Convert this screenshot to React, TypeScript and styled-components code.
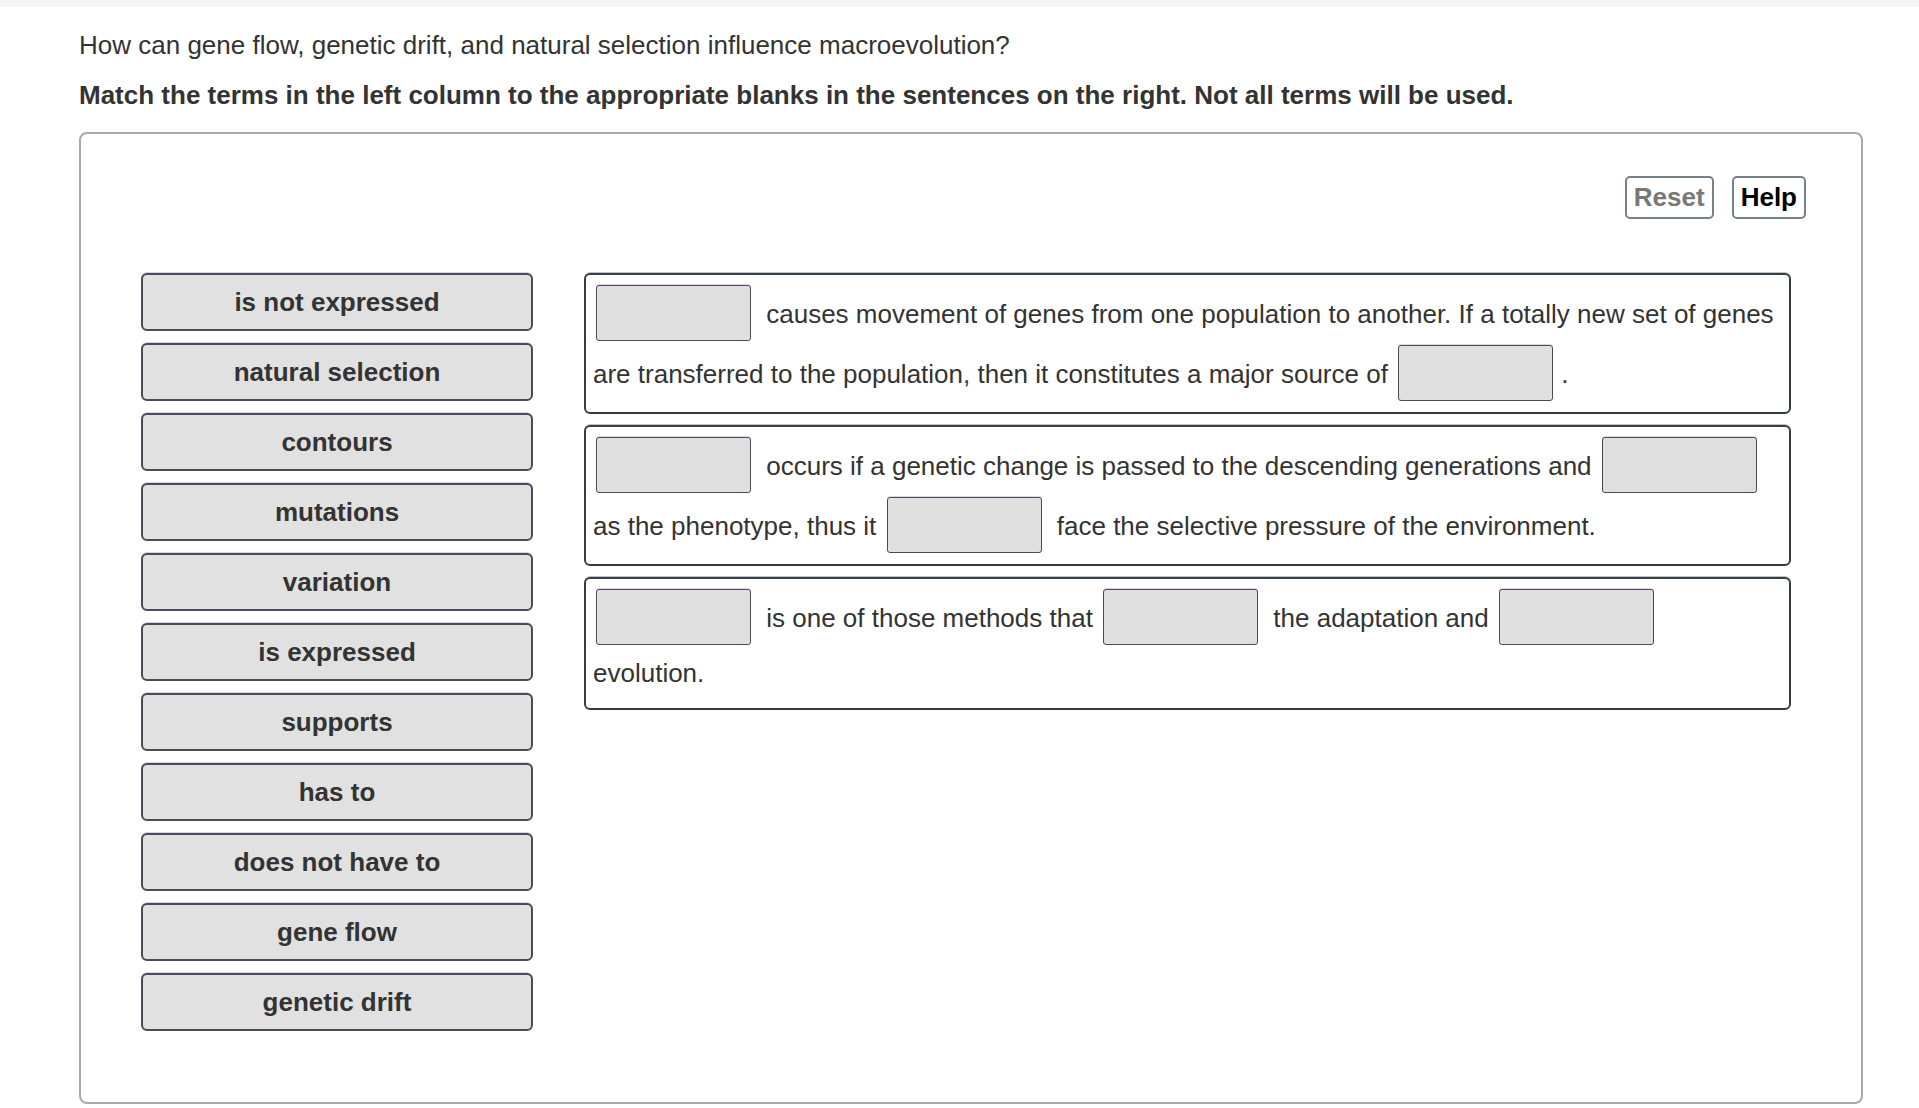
import React from 'react';
import styled, { createGlobalStyle } from 'styled-components';

const GlobalStyle = createGlobalStyle`
  html, body {
    margin: 0;
    padding: 0;
    background: #ffffff;
  }
  body {
    font-family: 'Liberation Sans', Arial, Helvetica, sans-serif;
    color: #333333;
  }
  * {
    box-sizing: border-box;
  }
`;

const TopStrip = styled.div`
  height: 7px;
  background-color: #f4f4f4;
`;

const Page = styled.main`
  padding: 23px 56px 0 79px;
`;

const Question = styled.p`
  margin: 0;
  font-size: 26px;
  line-height: 30px;
  color: #333;
`;

const Instruction = styled.p`
  margin: 20px 0 0;
  font-size: 26px;
  line-height: 30px;
  font-weight: bold;
  color: #333;
`;

const Board = styled.section`
  margin-top: 22px;
  border: 2px solid #a9a9a9;
  border-radius: 8px;
  padding: 42px 55px 71px 60px;
`;

const Toolbar = styled.div`
  display: flex;
  justify-content: flex-end;
  gap: 18px;
`;

const ToolButton = styled.button<{ $muted?: boolean }>`
  height: 43px;
  padding: 0 7px;
  border: 2px solid #76828a;
  border-radius: 5px;
  background: #ffffff;
  font-family: inherit;
  font-size: 26px;
  font-weight: bold;
  color: ${({ $muted }) => ($muted ? '#787878' : '#000000')};
  cursor: pointer;
`;

const Body = styled.div`
  margin-top: 54px;
  padding-right: 15px;
  display: grid;
  grid-template-columns: 392px 1fr;
  column-gap: 51px;
  align-items: start;
`;

const TermList = styled.div`
  display: flex;
  flex-direction: column;
  gap: 12px;
`;

const Term = styled.div`
  height: 58px;
  display: flex;
  align-items: center;
  justify-content: center;
  background-color: #e1e1e1;
  border: 2px solid #4a4a58;
  border-radius: 6px;
  box-shadow: 0 -1px 0 #d6d6ea;
  font-size: 26px;
  font-weight: bold;
  color: #333;
`;

const SentenceList = styled.div`
  display: flex;
  flex-direction: column;
  gap: 11px;
`;

const Sentence = styled.p`
  margin: 0;
  padding: 8px 14px 9px 7px;
  border: 2px solid #363d42;
  border-radius: 6px;
  box-shadow: 0 -1px 0 #b9c6cc;
  font-size: 26px;
  line-height: 52px;
  color: #333;
`;

const Blank = styled.span`
  display: inline-block;
  width: 155px;
  height: 56px;
  margin: 2px 8px 2px 3px;
  vertical-align: -20px;
  background-color: #e0e0e0;
  border: 1.5px solid #4a4a58;
  border-radius: 3px;
  box-shadow: 0 -1px 0 #d8d8ea;
`;

const terms = [
  'is not expressed',
  'natural selection',
  'contours',
  'mutations',
  'variation',
  'is expressed',
  'supports',
  'has to',
  'does not have to',
  'gene flow',
  'genetic drift',
];

export default function App() {
  return (
    <>
      <GlobalStyle />
      <TopStrip />
      <Page>
        <Question>How can gene flow, genetic drift, and natural selection influence macroevolution?</Question>
        <Instruction>
          Match the terms in the left column to the appropriate blanks in the sentences on the right. Not all terms
          will be used.
        </Instruction>
        <Board>
          <Toolbar>
            <ToolButton $muted>Reset</ToolButton>
            <ToolButton>Help</ToolButton>
          </Toolbar>
          <Body>
            <TermList>
              {terms.map((t) => (
                <Term key={t}>{t}</Term>
              ))}
            </TermList>
            <SentenceList>
              <Sentence>
                <Blank /> causes movement of genes from one population to another. If a totally new set of genes are
                transferred to the population, then it constitutes a major source of <Blank />.
              </Sentence>
              <Sentence>
                <Blank /> occurs if a genetic change is passed to the descending generations and <Blank /> as the
                phenotype, thus it <Blank /> face the selective pressure of the environment.
              </Sentence>
              <Sentence>
                <Blank /> is one of those methods that <Blank /> the adaptation and <Blank /> evolution.
              </Sentence>
            </SentenceList>
          </Body>
        </Board>
      </Page>
    </>
  );
}
